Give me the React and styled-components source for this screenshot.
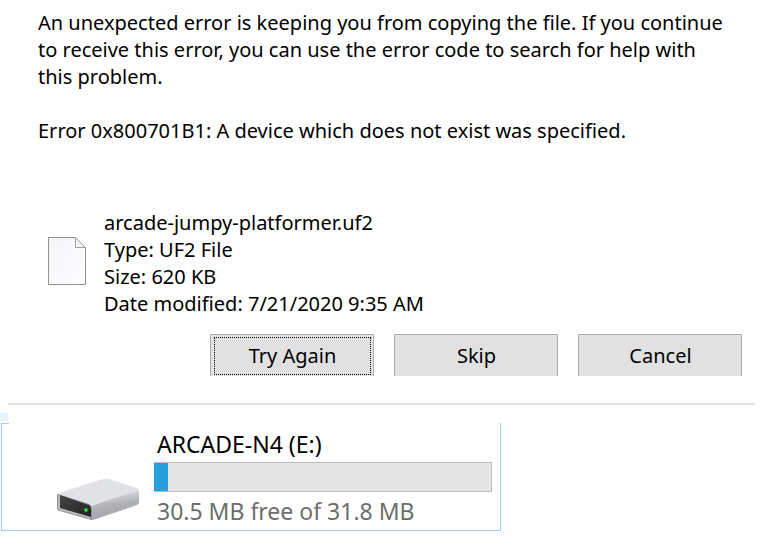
import styled, {createGlobalStyle} from "styled-components";

const GlobalStyle = createGlobalStyle`
    * {
        box-sizing: border-box;
    }
    body {
        margin: 0;
        background: #fff;
        color: #000;
        font-family: "Noto Sans", "Open Sans", sans-serif;
    }
    p, h2 {
        margin: 0;
        font-weight: 400;
    }
`;

const Dialog = styled.section`
    display: flex;
    flex-direction: column;
    padding: 9px 39px 27px 38px;
`;
const Message = styled.div`
    display: flex;
    flex-direction: column;
    gap: 27px;
    font-size: 20px;
    line-height: 27px;
`;
const FileInfo = styled.div`
    display: flex;
    align-items: center;
    gap: 18px;
    margin-top: 65px;
    padding-left: 10px;
`;
const FileDetails = styled.div`
    font-size: 20px;
    line-height: 27px;
`;
const Buttons = styled.div`
    display: flex;
    justify-content: flex-end;
    gap: 20px;
    margin-top: 17px;
`;
const Button = styled.button`
    width: 164px;
    height: 42px;
    padding: 2px 2px 2px 3px;
    border: 1px solid #adadad;
    border-bottom: none;
    background: #e1e1e1;
    color: #000;
    font-family: inherit;
    font-size: 20px;
    line-height: 36px;
`;
const ButtonLabel = styled.span`
    display: block;
    border: 1px ${(props) => (props.$focused ? "dotted #000" : "solid transparent")};
`;

const Divider = styled.hr`
    height: 2px;
    margin: 0 26px 0 8px;
    border: none;
    background: #e2e2e2;
`;
const Selection = styled.div`
    width: 8px;
    height: 8px;
    margin: 8px 0 2px;
    background: #e5f3ff;
`;

const Drive = styled.section`
    max-width: 500px;
    margin-left: 1px;
    border: solid #99d1ff;
    border-width: 0 0 1px 1px;
    background: linear-gradient(#99d1ff, #99d1ff) no-repeat 0 0 / 7px 1px;
`;
const DriveBody = styled.div`
    display: flex;
    align-items: flex-end;
    gap: 9px;
    margin-top: 2px;
    padding: 6px 8px 2px 51px;
    border-right: 1px solid #99d1ff;
`;
const DriveInfo = styled.div`
    flex: 1;
`;
const DriveName = styled.h2`
    padding: 0 0 3px 3px;
    font-size: 23px;
    line-height: 30px;
`;
const DriveSpace = styled.p`
    padding: 2px 0 0 3px;
    color: #6d6d6d;
    font-size: 23px;
    line-height: 34px;
`;
const Bar = styled.div`
    height: 30px;
    border: 1px solid #bcbcbc;
    border-left: none;
    background: #e6e6e6;
`;
const BarFill = styled.div`
    height: 100%;
    background: #26a0da;
`;
const Icon = styled.svg`
    flex: none;
    margin-bottom: 4px;
`;

function FileIcon() {
    return (
        <Icon width="38" height="48" viewBox="0 0 38 48" aria-hidden="true">
            <defs>
                <linearGradient id="page" x1="0" y1="0" x2="1" y2="1">
                    <stop offset="0" stopColor="#f4f5f6" />
                    <stop offset="1" stopColor="#fdfdff" />
                </linearGradient>
                <linearGradient id="fold" x1="0" y1="1" x2="1" y2="0">
                    <stop offset="0" stopColor="#fff" />
                    <stop offset="1" stopColor="#d5d5d5" />
                </linearGradient>
            </defs>
            <path d="M.5.5H27.5L37.5 10.5V47.5H.5Z" fill="url(#page)" stroke="#929292" />
            <path d="M27.5.5V10.5H37.5Z" fill="url(#fold)" stroke="#a0a0a0" />
        </Icon>
    );
}

function DriveIcon() {
    return (
        <Icon width="92" height="52" viewBox="0 0 92 52" aria-hidden="true">
            <defs>
                <linearGradient id="side" x1="0" y1="0" x2=".25" y2="1">
                    <stop offset=".3" stopColor="#d2d3d5" />
                    <stop offset=".6" stopColor="#b0b1b4" />
                    <stop offset="1" stopColor="#a5a6a9" />
                </linearGradient>
                <linearGradient id="front" x1="0" y1="0" x2="1" y2="1">
                    <stop offset="0" stopColor="#454545" />
                    <stop offset="1" stopColor="#222" />
                </linearGradient>
                <linearGradient id="shadow">
                    <stop offset="0" stopColor="#ccc" />
                    <stop offset="1" stopColor="#fff" />
                </linearGradient>
            </defs>
            <path d="M80 31L91 29L82 34L60 41Z" fill="url(#shadow)" />
            <path d="M38 34L85 17Q86 18 86 20V30Q86 32 84 33L40 48L37 48Z" fill="url(#side)" />
            <path d="M4 23Q4 22 6 21L50 7Q53 6 56 7L84 16Q87 17 84 19L42 32Q39 34 38 37L36 33Z" fill="#e1e2e6" />
            <path d="M4.5 22.5L36 32.5Q38.5 33.5 38.5 36V47.5L5 38Q4.5 37.5 4.5 36Z" fill="#b8b9bb" stroke="#929395" />
            <path d="M7 23L36 33Q38 34 38 37V45L7 36Z" fill="url(#front)" />
            <circle cx="33" cy="38" r="2.5" fill="#17651b" />
            <circle cx="33" cy="38" r="1.5" fill="#3bf03f" />
        </Icon>
    );
}

export default function App() {
    const total = 31.8;
    const free = 30.5;
    const used = ((total - free) / total) * 100;

    return (
        <main>
            <GlobalStyle />
            <Dialog>
                <Message>
                    <p>
                        An unexpected error is keeping you from copying the file. If you continue
                        <br />
                        to receive this error, you can use the error code to search for help with
                        <br />
                        this problem.
                    </p>
                    <p>Error 0x800701B1: A device which does not exist was specified.</p>
                </Message>
                <FileInfo>
                    <FileIcon />
                    <FileDetails>
                        <p>arcade-jumpy-platformer.uf2</p>
                        <p>Type: UF2 File</p>
                        <p>Size: 620 KB</p>
                        <p>Date modified: 7/21/2020 9:35 AM</p>
                    </FileDetails>
                </FileInfo>
                <Buttons>
                    <Button type="button">
                        <ButtonLabel $focused>Try Again</ButtonLabel>
                    </Button>
                    <Button type="button">
                        <ButtonLabel>Skip</ButtonLabel>
                    </Button>
                    <Button type="button">
                        <ButtonLabel>Cancel</ButtonLabel>
                    </Button>
                </Buttons>
            </Dialog>
            <Divider />
            <Selection />
            <Drive>
                <DriveBody>
                    <DriveIcon />
                    <DriveInfo>
                        <DriveName id="drive-name">ARCADE-N4 (E:)</DriveName>
                        <Bar
                            role="progressbar"
                            aria-labelledby="drive-name"
                            aria-valuenow={Math.round(used)}
                        >
                            <BarFill style={{width: `${used}%`}} />
                        </Bar>
                        <DriveSpace>{`${free} MB free of ${total} MB`}</DriveSpace>
                    </DriveInfo>
                </DriveBody>
            </Drive>
        </main>
    );
}
